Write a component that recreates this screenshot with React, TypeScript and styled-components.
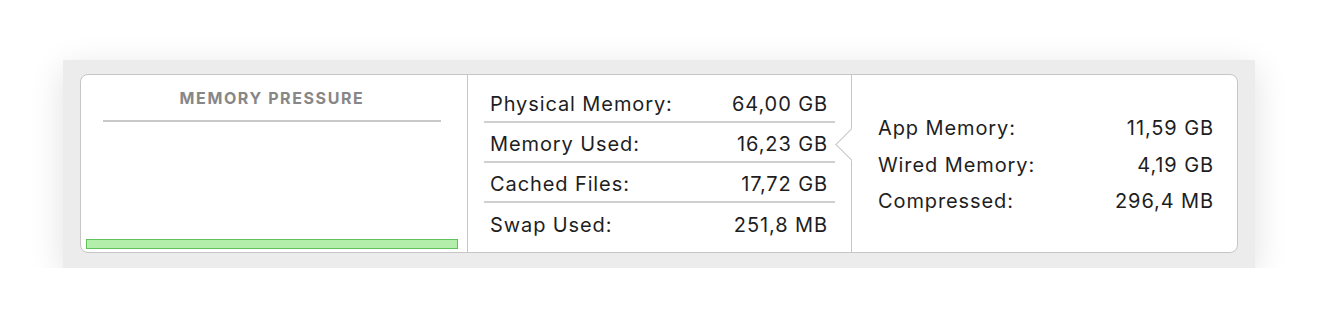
import React from 'react';
import styled, { createGlobalStyle } from 'styled-components';

const GlobalStyle = createGlobalStyle`
  body {
    margin: 0;
    background: #ffffff;
    font-family: Inter, "Liberation Sans", sans-serif;
  }
`;

const physical = [
  { label: 'Physical Memory:', value: '64,00 GB' },
  { label: 'Memory Used:', value: '16,23 GB' },
  { label: 'Cached Files:', value: '17,72 GB' },
  { label: 'Swap Used:', value: '251,8 MB' },
];

const breakdown = [
  { label: 'App Memory:', value: '11,59 GB' },
  { label: 'Wired Memory:', value: '4,19 GB' },
  { label: 'Compressed:', value: '296,4 MB' },
];

const App: React.FC = () => {
  return (
    <>
      <GlobalStyle />
      <Page>
        <Panel>
          <Card>
            <PressureSection>
              <PressureTitle>MEMORY PRESSURE</PressureTitle>
              <PressureRule />
              <PressureGraph>
                <PressureBar />
              </PressureGraph>
            </PressureSection>
            <StatsSection>
              {physical.map((row) => (
                <StatRow key={row.label}>
                  <Label>{row.label}</Label>
                  <Value>{row.value}</Value>
                </StatRow>
              ))}
            </StatsSection>
            <DetailSection>
              <Pointer />
              {breakdown.map((row) => (
                <DetailRow key={row.label}>
                  <Label>{row.label}</Label>
                  <Value>{row.value}</Value>
                </DetailRow>
              ))}
            </DetailSection>
          </Card>
        </Panel>
      </Page>
    </>
  );
};

const Page = styled.div`
  padding: 60px 0 0 63px;
`;

const Panel = styled.div`
  width: 1192px;
  height: 208px;
  box-sizing: border-box;
  padding: 14px 17px 15px;
  background: #ececed;
  box-shadow: 0 8px 32px rgba(0, 0, 0, 0.12);
`;

const Card = styled.div`
  display: flex;
  height: 179px;
  box-sizing: border-box;
  background: #ffffff;
  border: 1px solid #c6c6c6;
  border-radius: 8px;
`;

const PressureSection = styled.div`
  width: 386px;
  display: flex;
  flex-direction: column;
  padding: 0 9px 3px 5px;
  box-sizing: border-box;
`;

const PressureTitle = styled.div`
  margin-top: 13px;
  text-align: center;
  font-size: 16px;
  font-weight: 700;
  letter-spacing: 1.6px;
  color: #878787;
  line-height: 20px;
`;

const PressureRule = styled.div`
  margin: 12px 17px 0 17px;
  border-top: 2px solid #c8c8c8;
`;

const PressureGraph = styled.div`
  flex: 1;
  display: flex;
  align-items: flex-end;
`;

const PressureBar = styled.div`
  width: 100%;
  height: 10px;
  box-sizing: border-box;
  background: #b3efaa;
  border: 1px solid #5fc25d;
`;

const StatsSection = styled.div`
  width: 384px;
  box-sizing: border-box;
  border-left: 1px solid #c6c6c6;
  padding: 8px 16px 0;
`;

const StatRow = styled.div`
  display: flex;
  justify-content: space-between;
  align-items: center;
  height: 40px;
  box-sizing: border-box;
  padding: 4px 7px 0 6px;
  border-bottom: 2px solid #d0d0d0;

  &:last-child {
    border-bottom: none;
  }
`;

const DetailSection = styled.div`
  position: relative;
  flex: 1;
  display: flex;
  flex-direction: column;
  justify-content: center;
  border-left: 1px solid #c6c6c6;
  padding: 2px 23px 0 26px;
`;

const Pointer = styled.div`
  position: absolute;
  left: -12px;
  top: 58px;
  width: 22px;
  height: 22px;
  background: #ffffff;
  border-left: 1px solid #c6c6c6;
  border-bottom: 1px solid #c6c6c6;
  transform: rotate(45deg);
`;

const DetailRow = styled.div`
  display: flex;
  justify-content: space-between;
  align-items: center;
  height: 36.5px;
`;

const Label = styled.span`
  font-size: 20px;
  letter-spacing: 0.9px;
  color: #1e1e1e;
`;

const Value = styled.span`
  font-size: 20px;
  letter-spacing: 0.9px;
  color: #1e1e1e;
`;

export default App;
